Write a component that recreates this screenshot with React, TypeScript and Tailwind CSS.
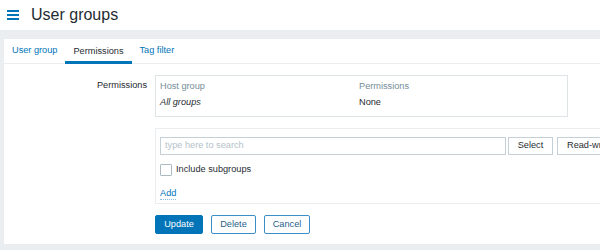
import { useState } from "react";

const App = () => {
  const [subgroups, setSubgroups] = useState(false);

  return (
    <div className="w-[600px] h-[250px] overflow-hidden bg-[#ebeef0] font-['Liberation_Sans',Arial,sans-serif] text-[9.2px] text-[#1f2c33]">
      {/* header */}
      <div className="h-[30px] bg-white flex items-center">
        <div className="ml-[7px] w-[12px] flex flex-col gap-[2.5px]">
          <span className="block h-[1.5px] bg-[#0275b8]" />
          <span className="block h-[1.5px] bg-[#0275b8]" />
          <span className="block h-[1.5px] bg-[#0275b8]" />
        </div>
        <h1 className="ml-[12px] text-[16px] leading-none text-[#1f2c33]">User groups</h1>
      </div>

      {/* content */}
      <div className="mt-[9px] ml-[4px] h-[205px] bg-white overflow-hidden">
        {/* tabs */}
        <div className="h-[25px] flex items-stretch border-b border-[#ebeef0]">
          <div className="px-[8px] flex items-center text-[#0275b8]">User group</div>
          <div className="px-[8px] flex items-center border-b-[3px] border-[#0275b8] pt-[3px] -mb-px">Permissions</div>
          <div className="px-[8px] flex items-center text-[#0275b8]">Tag filter</div>
        </div>

        {/* form */}
        <div className="flex mt-[11px]">
          <div className="w-[143px] shrink-0 text-right pt-[4px]">Permissions</div>
          <div className="ml-[8px] flex-1 min-w-0">
            {/* current permissions */}
            <div className="w-[413px] h-[42px] border border-[#dfe4e7] px-[4px] pt-[3px]">
              <div className="flex h-[16px] items-center text-[#768d99]">
                <div className="w-[199px]">Host group</div>
                <div>Permissions</div>
              </div>
              <div className="flex h-[16px] items-center">
                <div className="w-[199px] italic">All groups</div>
                <div>None</div>
              </div>
            </div>

            {/* add permissions */}
            <div className="mt-[11px] h-[76px] w-[520px] border border-[#ebeef0] px-[4px] pt-[8px]">
              <div className="flex items-center">
                <div className="w-[346px] shrink-0 h-[18px] border border-[#c5d0d6] flex items-center px-[4px] text-[#b4c2c9]">
                  type here to search
                </div>
                <button className="ml-[2px] shrink-0 w-[45px] h-[18px] border border-[#c5d0d6] bg-white">Select</button>
                <button className="ml-[4px] shrink-0 w-[70px] h-[18px] border border-[#c5d0d6] bg-white text-left pl-[9px]">Read-write</button>
              </div>
              <label className="mt-[8px] flex items-center gap-[4px]">
                <span
                  className="w-[12px] h-[12px] border border-[#acbbc2] rounded-[1px] bg-white"
                  onClick={() => setSubgroups(!subgroups)}
                />
                Include subgroups
              </label>
              <div className="mt-[11px] inline-block text-[#0275b8] border-b border-dotted border-[#8cbde0] leading-[11px]">
                Add
              </div>
            </div>

            {/* buttons */}
            <div className="mt-[11px] flex gap-[7px]">
              <button className="w-[48px] h-[19px] bg-[#0275b8] text-white border border-[#0275b8] rounded-[2px]">Update</button>
              <button className="ml-[1px] w-[45px] h-[19px] bg-white text-[#1f5f8a] border border-[#3a8fc9] rounded-[2px]">Delete</button>
              <button className="ml-[1px] w-[46px] h-[19px] bg-white text-[#1f5f8a] border border-[#3a8fc9] rounded-[2px]">Cancel</button>
            </div>
          </div>
        </div>
      </div>
    </div>
  );
};

export default App;
